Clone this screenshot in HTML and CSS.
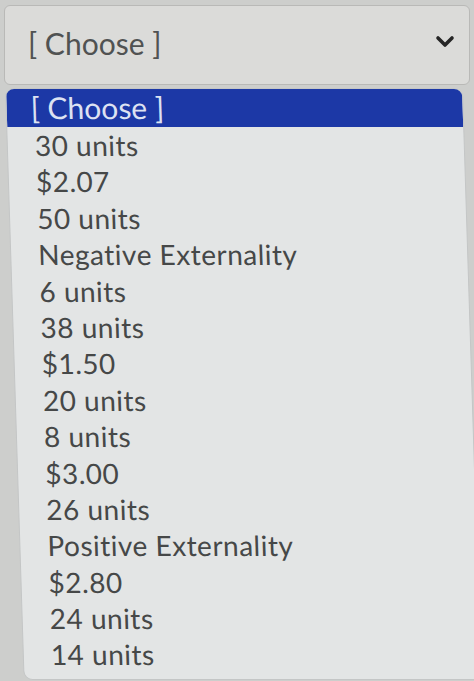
FILE: index.html
```html
<!DOCTYPE html>
<html>
<head>
<meta charset="utf-8">
<link rel="stylesheet" href="styles.css">
</head>
<body>
<div class="page">
  <div class="select">
    <span class="value">[ Choose ]</span>
    <svg class="chev" width="20" height="14" viewBox="0 0 20 14"><path d="M3 3 L10 10 L17 3" fill="none" stroke="#262626" stroke-width="3.6" stroke-linecap="round" stroke-linejoin="round"/></svg>
  </div>
  <ul class="list">
    <li class="opt active">[ Choose ]</li>
    <li class="opt">30 units</li>
    <li class="opt">$2.07</li>
    <li class="opt">50 units</li>
    <li class="opt">Negative Externality</li>
    <li class="opt">6 units</li>
    <li class="opt">38 units</li>
    <li class="opt">$1.50</li>
    <li class="opt">20 units</li>
    <li class="opt">8 units</li>
    <li class="opt">$3.00</li>
    <li class="opt">26 units</li>
    <li class="opt">Positive Externality</li>
    <li class="opt">$2.80</li>
    <li class="opt">24 units</li>
    <li class="opt">14 units</li>
  </ul>
</div>
</body>
</html>
```
FILE: styles.css
```css
html, body {
  margin: 0;
  padding: 0;
  background: #cdcecc;
  font-family: Lato, "Open Sans", sans-serif;
}
.page {
  width: 474px;
  height: 681px;
  overflow: hidden;
  padding-top: 5px;
  box-sizing: border-box;
}
.select {
  margin: 0 4px 0 4px;
  height: 80px;
  box-sizing: border-box;
  border: 1px solid #b9b9b7;
  border-radius: 6px;
  background: #dbdbd9;
  display: flex;
  align-items: center;
  justify-content: space-between;
  padding: 0 14px 0 23px;
}
.value {
  font-size: 30px;
  color: #505252;
  padding-bottom: 4px;
}
.chev {
  margin-top: -6px;
}
.list {
  list-style: none;
  margin: 3px 0 0 5px;
  padding: 0 0 6px 0;
  width: 456px;
  background: #e3e5e5;
  border: 1px solid #c4c6c6;
  border-radius: 9px;
  overflow: hidden;
  transform: skewX(1.8deg);
  transform-origin: top left;
}
.opt {
  height: 36.4px;
  line-height: 36.4px;
  padding-left: 27px;
  font-size: 28px;
  color: #464848;
  letter-spacing: 0.5px;
}
.opt.active {
  height: 38px;
  line-height: 36px;
  background: #1c38a6;
  color: #dde2f2;
  font-size: 30px;
  padding-left: 24px;
  letter-spacing: 0;
}
```
